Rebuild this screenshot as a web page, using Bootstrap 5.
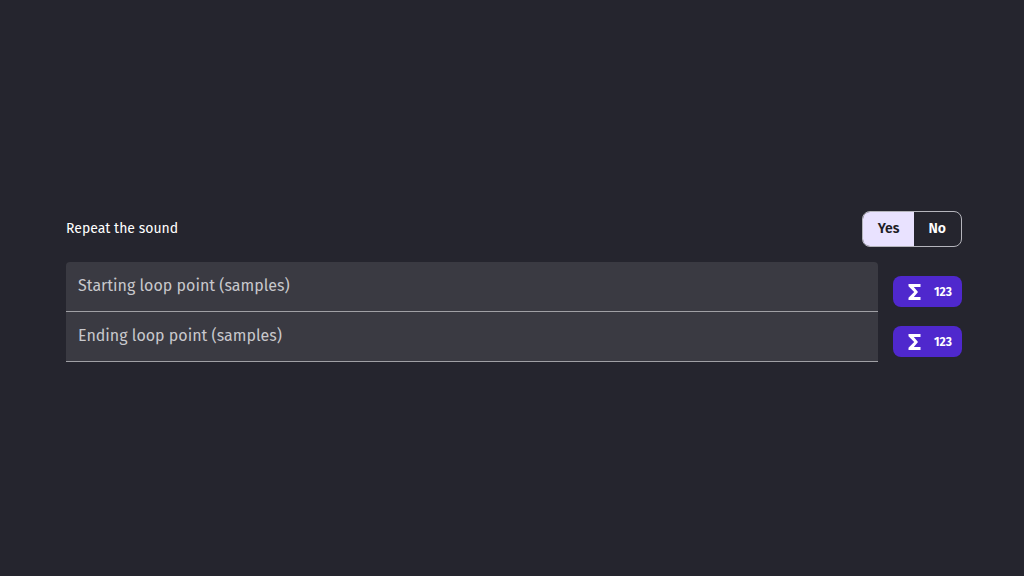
<!DOCTYPE html>
<html lang="en">
<head>
<meta charset="utf-8">
<meta name="viewport" content="width=device-width, initial-scale=1">
<title>Repeat the sound</title>
<link href="https://cdn.jsdelivr.net/npm/bootstrap@5.3.0/dist/css/bootstrap.min.css" rel="stylesheet">
<style>
body { background: #25252e; color: #fff; font-family: "Fira Sans", "Noto Sans", sans-serif; }
.panel { padding: 0 62px 4px 66px; }
.caption { font-size: 14px; line-height: 20px; }
.choice { height: 36px; border: 1px solid #b5b5bc; border-radius: 8px; overflow: hidden; }
.choice .btn { border: 0; border-radius: 0; margin: 0; padding: 0 15px 0 14px; font-size: 14px; line-height: 34px; font-weight: 600; color: #fff; }
.choice .btn-check:checked + .btn { background: #e9e2ff; color: #1d1d26; }
.choice .btn-yes { padding: 0 15px; }
.fields { margin-top: 15px; }
.field-row { gap: 15px; }
.field { height: 50px; padding: 0 12px 2px; background: #3a3a42; border: 0; border-bottom: 1px solid #a0a0a5; border-radius: 0; color: #fff; font-size: 16px; }
.field:focus { background: #3a3a42; color: #fff; }
.field::placeholder { color: #c8c8cc; opacity: 1; }
.field-first { border-radius: 4px 4px 0 0; }
.expr { width: 69px; height: 31px; margin-top: 10px; padding: 0 10px 0 15px; border: 0; border-radius: 8px; background: #4f28cd; color: #fff; font-size: 12px; line-height: 18px; font-weight: 700; }
.expr:hover { background: #5c36d8; color: #fff; }
</style>
</head>
<body>
<main class="panel min-vh-100 d-flex flex-column justify-content-center">
  <div class="d-flex align-items-center justify-content-between">
    <span class="caption" id="repeat">Repeat the sound</span>
    <div class="choice d-flex" role="radiogroup" aria-labelledby="repeat">
      <input class="btn-check" type="radio" name="repeat" id="yes" checked><label class="btn btn-yes" for="yes">Yes</label>
      <input class="btn-check" type="radio" name="repeat" id="no"><label class="btn" for="no">No</label>
    </div>
  </div>
  <div class="fields d-flex flex-column">
    <div class="field-row d-flex align-items-center">
      <input class="form-control field field-first" type="text" aria-label="Starting loop point (samples)" placeholder="Starting loop point (samples)">
      <button class="btn expr d-flex flex-shrink-0 align-items-center justify-content-between" type="button">
        <svg width="13" height="16" viewBox="0 0 13 16" fill="currentColor" aria-hidden="true"><path d="M0.5 0H12.5V3H5.8L10 8L5.8 13H12.5V16H0.5V13.7L6.2 8L0.5 2.3Z"/></svg>
        <span>123</span>
      </button>
    </div>
    <div class="field-row d-flex align-items-center">
      <input class="form-control field" type="text" aria-label="Ending loop point (samples)" placeholder="Ending loop point (samples)">
      <button class="btn expr d-flex flex-shrink-0 align-items-center justify-content-between" type="button">
        <svg width="13" height="16" viewBox="0 0 13 16" fill="currentColor" aria-hidden="true"><path d="M0.5 0H12.5V3H5.8L10 8L5.8 13H12.5V16H0.5V13.7L6.2 8L0.5 2.3Z"/></svg>
        <span>123</span>
      </button>
    </div>
  </div>
</main>
<script src="https://cdn.jsdelivr.net/npm/bootstrap@5.3.0/dist/js/bootstrap.bundle.min.js"></script>
</body>
</html>
